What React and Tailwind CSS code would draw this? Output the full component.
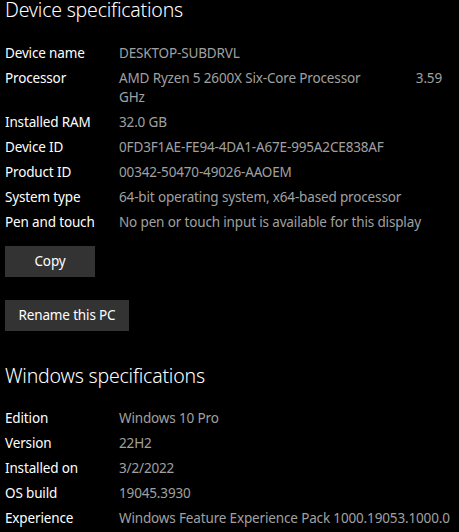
import React from "react";

const font = { fontFamily: '"Segoe UI", "Noto Sans", "Open Sans", sans-serif' };

function Row({ label, children }) {
  return (
    <div className="flex pt-[6px] text-[13.5px] leading-[19px] tracking-[-0.15px]">
      <div className="w-[114px] shrink-0 text-white">{label}</div>
      <div className="text-[#a0a0a0]">{children}</div>
    </div>
  );
}

export default function App() {
  return (
    <div
      className="w-[459px] h-[532px] overflow-hidden bg-black text-white pl-[5px]"
      style={font}
    >
      <h1 className="text-[19.5px] leading-[19px] font-light tracking-[-0.2px]">Device specifications</h1>
      <div className="pt-[19px]">
        <Row label="Device name">DESKTOP-SUBDRVL</Row>
        <Row label="Processor">
          <div className="flex w-[323px] justify-between">
            <span>AMD Ryzen 5 2600X Six-Core Processor</span>
            <span>3.59</span>
          </div>
          <div>GHz</div>
        </Row>
        <Row label="Installed RAM">32.0 GB</Row>
        <Row label="Device ID">0FD3F1AE-FE94-4DA1-A67E-995A2CE838AF</Row>
        <Row label="Product ID">00342-50470-49026-AAOEM</Row>
        <Row label="System type">64-bit operating system, x64-based processor</Row>
        <Row label="Pen and touch">No pen or touch input is available for this display</Row>
      </div>
      <div className="flex flex-col items-start gap-[23px] pt-[14px]">
        <button className="w-[90px] h-[31px] bg-[#333333] text-white text-[13.5px] tracking-[-0.15px]">Copy</button>
        <button className="w-[124px] h-[31px] bg-[#333333] text-white text-[13.5px] tracking-[-0.15px]">Rename this PC</button>
      </div>
      <h2 className="text-[19.5px] leading-[19px] mt-[35px] font-light tracking-[-0.2px]">Windows specifications</h2>
      <div className="pt-[18px]">
        <Row label="Edition">Windows 10 Pro</Row>
        <Row label="Version">22H2</Row>
        <Row label="Installed on">3/2/2022</Row>
        <Row label="OS build">19045.3930</Row>
        <Row label="Experience"><span className="whitespace-nowrap">Windows Feature Experience Pack 1000.19053.1000.0</span></Row>
      </div>
    </div>
  );
}
